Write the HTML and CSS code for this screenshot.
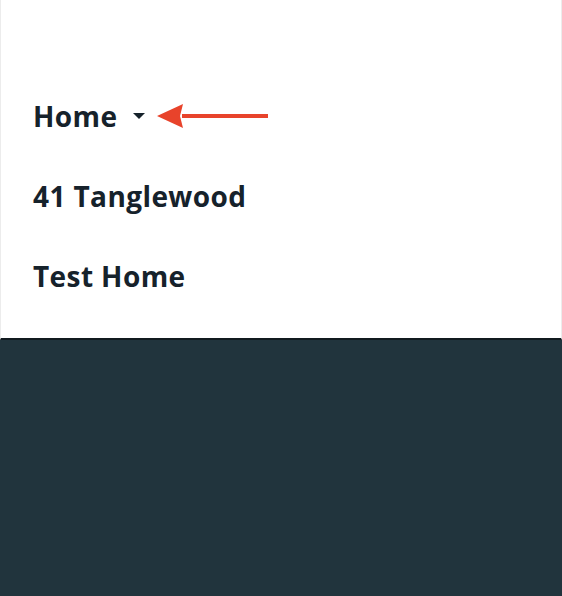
FILE: index.html
```html
<!DOCTYPE html>
<html>

<head>
    <title>Homes</title>
    <link rel="stylesheet" href="styles.css">
</head>

<body>
    <div class="menu">
        <ul class="home-list">
            <li class="home-item current">
                <span>Home</span>
                <span class="caret"></span>
                <svg class="arrow" width="112" height="26" viewBox="0 0 112 26">
                    <path d="M111 11 L25 11 L25 15 L111 15 Z" fill="#e8432b"/>
                    <path d="M0 13 L26 1 L23 13 L26 25 Z" fill="#e8432b"/>
                </svg>
            </li>
            <li class="home-item">41 Tanglewood</li>
            <li class="home-item">Test Home</li>
        </ul>
    </div>
    <div class="footer"></div>
</body>

</html>
```

FILE: styles.css
```css
body {
    margin: 0;
    font-family: "Open Sans", sans-serif;
    background-color: #21343d;
}

.menu {
    background: white;
    height: 338px;
    border-left: 1px solid #ececec;
    border-right: 1px solid #ececec;
    border-bottom: 2px solid #111a1f;
}

.home-list {
    list-style: none;
    margin: 0;
    padding: 76px 0 0 32px;
}

.home-item {
    display: flex;
    align-items: center;
    height: 80px;
    font-size: 28px;
    font-weight: 700;
    letter-spacing: 0.4px;
    color: #16222b;
    line-height: 1;
}

.caret {
    width: 0;
    height: 0;
    border-left: 6px solid transparent;
    border-right: 6px solid transparent;
    border-top: 6px solid #16222b;
    margin-left: 16px;
}

.arrow {
    margin-left: 12px;
}

.footer {
    height: 256px;
}
```
